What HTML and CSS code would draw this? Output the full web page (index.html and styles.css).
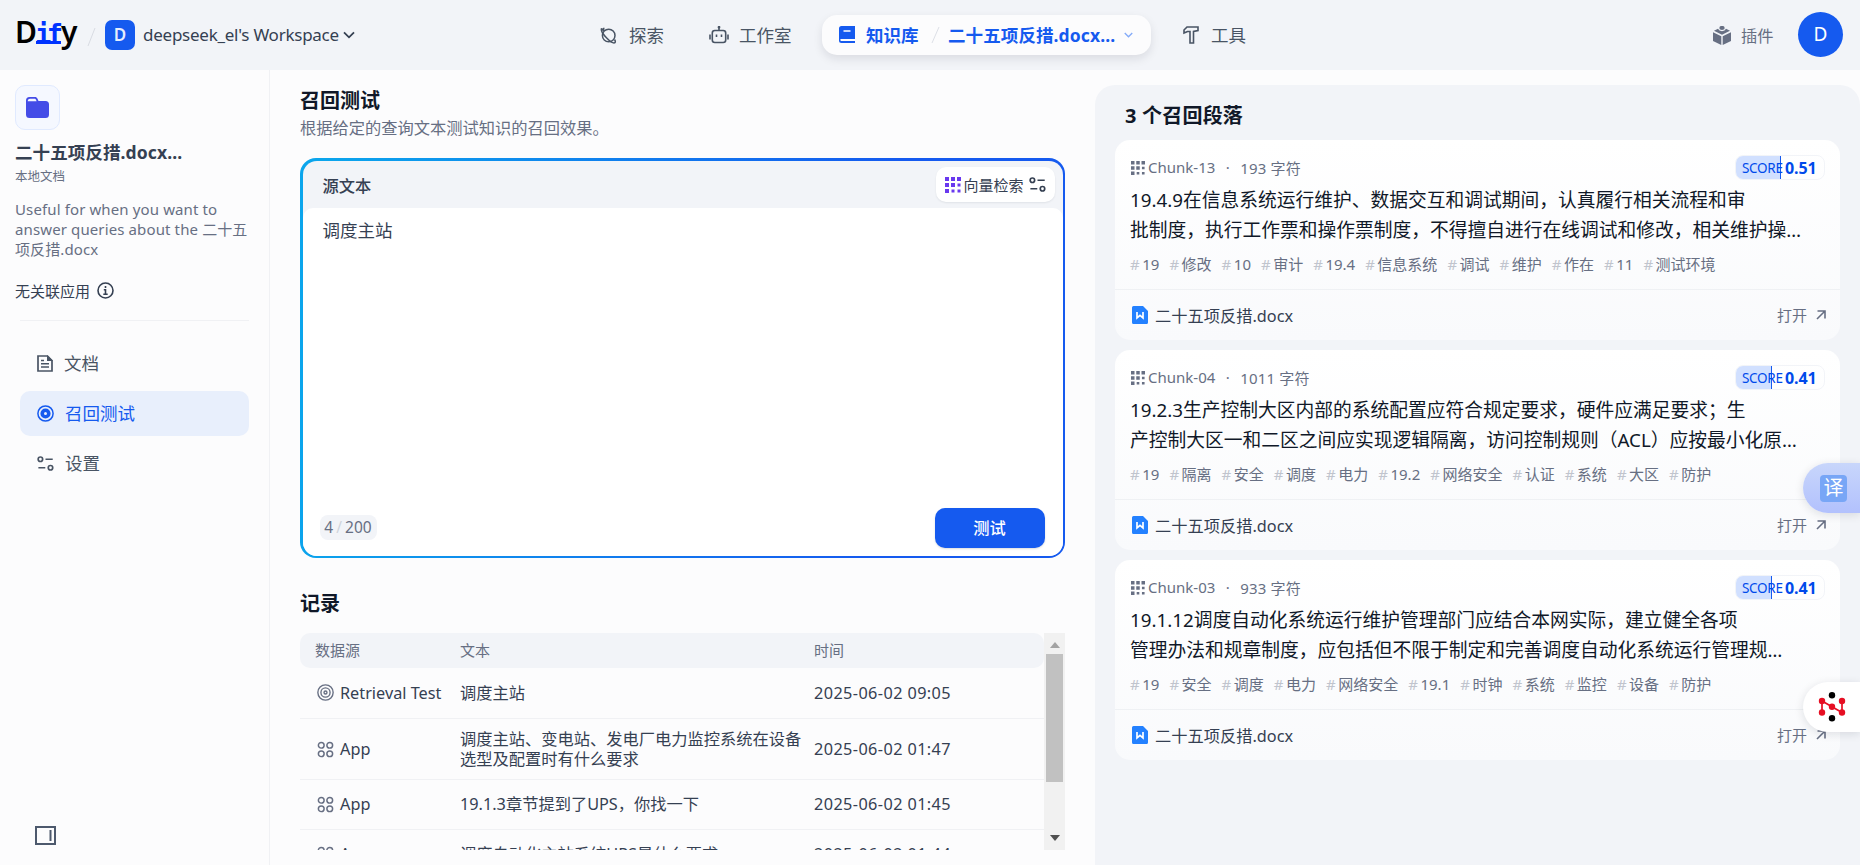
FILE: index.html
```
<!DOCTYPE html>
<html lang="zh-CN">

<head>
    <meta charset="UTF-8">
    <meta name="viewport" content="width=device-width, initial-scale=1.0">
    <title>召回测试 - Dify</title>
    <link rel="stylesheet" href="styles.css">
</head>

<body>
    <!-- shared icons -->
    <svg class="defs" width="0" height="0">
        <symbol id="i-dots" viewBox="0 0 16 16">
            <path d="M0 0h4v4H0zM6 0h4v4H6zM12 0h4v4h-4zM0 6h4v4H0zM6 6h4v4H6zM12.5 6.5h3v3h-3zM0 12h4v4H0zM6.5 12.5h3v3h-3zM12.5 12.5h3v3h-3z" fill="currentColor" />
        </symbol>
        <symbol id="i-sliders" viewBox="0 0 16 16">
            <g fill="none" stroke="currentColor" stroke-width="1.6">
                <circle cx="3.2" cy="4" r="2.1" />
                <path d="M8 4h6.8M1.3 12h6.5" />
                <circle cx="12.7" cy="12" r="2.1" />
            </g>
        </symbol>
        <symbol id="i-target" viewBox="0 0 16 16">
            <g fill="none" stroke="currentColor" stroke-width="1.3">
                <circle cx="8" cy="8" r="7.2" />
                <circle cx="8" cy="8" r="4.3" />
                <circle cx="8" cy="8" r="1.4" />
            </g>
        </symbol>
        <symbol id="i-app" viewBox="0 0 16 16">
            <g fill="none" stroke="currentColor" stroke-width="1.4">
                <circle cx="4" cy="4" r="2.7" />
                <circle cx="12" cy="4" r="2.7" />
                <circle cx="4" cy="12" r="2.7" />
                <circle cx="12" cy="12" r="2.7" />
            </g>
        </symbol>
        <symbol id="i-word" viewBox="0 0 16 18">
            <path d="M1.5 0H11l5 5v11.5a1.5 1.5 0 0 1-1.5 1.5h-13A1.5 1.5 0 0 1 0 16.500v-15A1.5 1.5 0 0 1 1.500 0z" fill="#2381ff" />
            <path d="M5 6v6l3-2.600 3 2.600V6" fill="none" stroke="#fff" stroke-width="1.7" />
        </symbol>
        <symbol id="i-arrow" viewBox="0 0 10 10">
            <path d="M1.500 1H9v7.500M9 1L1 9" fill="none" stroke="currentColor" stroke-width="1.6" />
        </symbol>
        <symbol id="i-down" viewBox="0 0 12 8">
            <path d="M1 1.300l5 5 5-5" fill="none" stroke="currentColor" stroke-width="1.8" />
        </symbol>
    </svg>

    <header class="header">
        <div class="header-left">
            <div class="logo">D<span>if</span>y</div>
            <svg class="slash" width="9" height="20" viewBox="0 0 9 20"><path d="M8 1L1 19" stroke="#d9dce3" fill="none" /></svg>
            <div class="ws-icon">D</div>
            <div class="ws-name">deepseek_el's Workspace</div>
            <svg class="ws-down" width="12" height="8"><use href="#i-down" /></svg>
        </div>
        <nav class="nav">
            <a class="nav-item explore">
                <svg width="17" height="17" viewBox="0 0 17 17" fill="none" stroke="currentColor" stroke-width="1.500">
                    <circle cx="8.700" cy="8.500" r="6.300" />
                    <path d="M4 4C1.500 1.500 1 1 1.500 3.500c.7 3.500 9 12.500 12.500 12.500 1.700 0 1.700-1.700.5-3.500M4.300 3.800C3 2 2.500 1.200 4.500 1.500" />
                </svg>
                <span>探索</span>
            </a>
            <a class="nav-item studio">
                <svg width="20" height="18" viewBox="0 0 20 18" fill="none" stroke="currentColor" stroke-width="1.600">
                    <rect x="3.300" y="4.500" width="13.400" height="12" rx="2.500" />
                    <path d="M10 4.500V1M1 8.500v5M19 8.500v5" />
                    <circle cx="10" cy="1.200" r=".6" />
                    <path d="M7.500 8.500v2.400M12.500 8.500v2.400" />
                </svg>
                <span>工作室</span>
            </a>
            <div class="nav-active">
                <svg width="16" height="18" viewBox="0 0 16 18">
                    <path d="M2.500 0H16v13H2.500c-.8 0-1 .5-1 1s.3 1 1 1H16v2H2.500A2.500 2.500 0 0 1 0 14.500v-12A2.500 2.500 0 0 1 2.500 0z" fill="currentColor" />
                    <path d="M4.500 5h7" stroke="#fff" stroke-width="1.500" />
                    <path d="M1.500 13.800H16" stroke="#fff" stroke-width="1" />
                </svg>
                <b class="kb">知识库</b>
                <svg class="nav-slash" width="9" height="18" viewBox="0 0 9 18"><path d="M8 1L1 17" stroke="#dde0e7" fill="none" /></svg>
                <b class="doc">二十五项反措.docx...</b>
                <svg class="nav-down" width="9" height="6" viewBox="0 0 12 8"><use href="#i-down" width="12" height="8" /></svg>
            </div>
            <a class="nav-item tools">
                <svg width="16" height="18" viewBox="0 0 16 18" fill="none" stroke="currentColor" stroke-width="1.600">
                    <path d="M4 1h11v3.500l-4.500 1V17H7V5.500H4.500L1 7V4z" />
                </svg>
                <span>工具</span>
            </a>
        </nav>
        <div class="header-right">
            <svg width="18" height="19" viewBox="0 0 18 19" fill="currentColor">
                <path d="M0 6.300l8.300 4V19L0 15zM18 6.300l-8.300 4V19L18 15zM1 4.800l4-2 1.500 1.700 2.500.8 2.500-.8L13 2.800l4 2-8 4zM6.500 1.200c0-1.500 5-1.500 5 0v1.600c0 1.500-5 1.500-5 0z" />
            </svg>
            <span class="plugin">插件</span>
            <div class="avatar">D</div>
        </div>
    </header>

    <div class="page">
        <aside class="sidebar">
            <div class="ds-icon">
                <svg width="23" height="21" viewBox="0 0 23 21">
                    <path d="M3.500 0h5.200c1.500 0 2.300.6 2.800 1.800l1 2.200H19.500A3.500 3.500 0 0 1 23 7.500v10a3.500 3.500 0 0 1-3.500 3.500h-16A3.500 3.500 0 0 1 0 17.500v-14A3.500 3.500 0 0 1 3.500 0z" fill="#444ce7" />
                    <path d="M1.700 4.200C2 2.500 2.800 1.800 4 1.800h4.300c1 0 1.500.4 1.800 1.200l.5 1.200z" fill="#f5f8ff" />
                </svg>
            </div>
            <div class="ds-name">二十五项反措.docx...</div>
            <div class="ds-type">本地文档</div>
            <div class="ds-desc">Useful for when you want to<br>answer queries about the 二十五<br>项反措.docx</div>
            <div class="ds-apps">无关联应用
                <svg width="17" height="17" viewBox="0 0 17 17" fill="none" stroke="currentColor" stroke-width="1.600">
                    <circle cx="8.500" cy="8.500" r="7.500" />
                    <path d="M8.500 4v2M6.800 7.800h1.700v4.500M6.300 12.300h4.400" />
                </svg>
            </div>
            <div class="side-nav">
                <a class="side-item">
                    <svg width="16" height="17" viewBox="0 0 16 17">
                        <path d="M1 1h9.500L15 5.500V16H1z" fill="none" stroke="currentColor" stroke-width="1.700" />
                        <path d="M10 0l6 6h-6z" fill="currentColor" />
                        <path d="M4 5.500h3M4 8.800h8M4 12h8" stroke="currentColor" stroke-width="1.500" />
                    </svg>
                    <span>文档</span>
                </a>
                <a class="side-item active">
                    <svg width="17" height="17" viewBox="0 0 17 17" fill="none" stroke="currentColor">
                        <circle cx="8.500" cy="8.500" r="7.600" stroke-width="1.500" />
                        <circle cx="8.500" cy="8.500" r="3.300" stroke-width="3.600" />
                    </svg>
                    <span>召回测试</span>
                </a>
                <a class="side-item">
                    <svg width="17" height="17"><use href="#i-sliders" /></svg>
                    <span>设置</span>
                </a>
            </div>
            <svg class="collapse" width="21" height="19" viewBox="0 0 21 19" fill="none" stroke="#4d596d" stroke-width="2">
                <path d="M1 1h19v17H1zM15.500 4v11" />
            </svg>
        </aside>

        <main class="main">
            <h1>召回测试</h1>
            <p class="sub">根据给定的查询文本测试知识的召回效果。</p>

            <div class="query">
                <div class="query-inner">
                    <div class="query-head">
                        <span>源文本</span>
                        <div class="method">
                            <svg class="purple" width="16" height="16"><use href="#i-dots" /></svg>
                            <span>向量检索</span>
                            <svg width="17" height="17"><use href="#i-sliders" /></svg>
                        </div>
                    </div>
                    <div class="query-body">
                        <div class="query-text">调度主站</div>
                        <div class="query-foot">
                            <div class="count">4<i>/</i>200</div>
                            <button class="test-btn">测试</button>
                        </div>
                    </div>
                </div>
            </div>

            <h2>记录</h2>
            <div class="records">
                <div class="table">
                    <div class="row thead"><span>数据源</span><span>文本</span><span>时间</span></div>
                    <div class="row first">
                        <span class="src"><svg width="17" height="17"><use href="#i-target" /></svg>Retrieval Test</span>
                        <span>调度主站</span>
                        <span class="time">2025-06-02 09:05</span>
                    </div>
                    <div class="row tall">
                        <span class="src"><svg width="17" height="17"><use href="#i-app" /></svg>App</span>
                        <span>调度主站、变电站、发电厂电力监控系统在设备<br>选型及配置时有什么要求</span>
                        <span class="time">2025-06-02 01:47</span>
                    </div>
                    <div class="row">
                        <span class="src"><svg width="17" height="17"><use href="#i-app" /></svg>App</span>
                        <span>19.1.3章节提到了UPS，你找一下</span>
                        <span class="time">2025-06-02 01:45</span>
                    </div>
                    <div class="row">
                        <span class="src"><svg width="17" height="17"><use href="#i-app" /></svg>App</span>
                        <span>调度自动化主站系统UPS是什么要求</span>
                        <span class="time">2025-06-02 01:44</span>
                    </div>
                </div>
                <div class="scrollbar">
                    <svg width="10" height="6" viewBox="0 0 10 6"><path d="M0 6l5-6 5 6z" fill="#a3a3a3" /></svg>
                    <div class="thumb"></div>
                    <svg class="sb-down" width="10" height="6" viewBox="0 0 10 6"><path d="M0 0l5 6 5-6z" fill="#505050" /></svg>
                </div>
            </div>
        </main>

        <section class="results">
            <h2>3 个召回段落</h2>

            <article class="card">
                <div class="meta">
                    <svg width="14" height="14"><use href="#i-dots" /></svg>
                    <span class="chunk">Chunk-13</span><span class="dot">·</span><span class="chars">193 字符</span>
                    <div class="score"><div class="fill" style="width: 51%"></div><span>SCORE</span><b>0.51</b></div>
                </div>
                <p class="text">19.4.9在信息系统运行维护、数据交互和调试期间，认真履行相关流程和审<br>批制度，执行工作票和操作票制度，不得擅自进行在线调试和修改，相关维护操…</p>
                <div class="tags"><span>19</span><span>修改</span><span>10</span><span>审计</span><span>19.4</span><span>信息系统</span><span>调试</span><span>维护</span><span>作在</span><span>11</span><span>测试环境</span></div>
                <div class="card-foot">
                    <svg width="16" height="18"><use href="#i-word" /></svg>
                    <span class="file">二十五项反措.docx</span>
                    <span class="open">打开</span>
                    <svg class="arrow" width="10" height="10"><use href="#i-arrow" /></svg>
                </div>
            </article>

            <article class="card">
                <div class="meta">
                    <svg width="14" height="14"><use href="#i-dots" /></svg>
                    <span class="chunk">Chunk-04</span><span class="dot">·</span><span class="chars">1011 字符</span>
                    <div class="score"><div class="fill" style="width: 41%"></div><span>SCORE</span><b>0.41</b></div>
                </div>
                <p class="text">19.2.3生产控制大区内部的系统配置应符合规定要求，硬件应满足要求；生<br>产控制大区一和二区之间应实现逻辑隔离，访问控制规则（ACL）应按最小化原…</p>
                <div class="tags"><span>19</span><span>隔离</span><span>安全</span><span>调度</span><span>电力</span><span>19.2</span><span>网络安全</span><span>认证</span><span>系统</span><span>大区</span><span>防护</span></div>
                <div class="card-foot">
                    <svg width="16" height="18"><use href="#i-word" /></svg>
                    <span class="file">二十五项反措.docx</span>
                    <span class="open">打开</span>
                    <svg class="arrow" width="10" height="10"><use href="#i-arrow" /></svg>
                </div>
            </article>

            <article class="card">
                <div class="meta">
                    <svg width="14" height="14"><use href="#i-dots" /></svg>
                    <span class="chunk">Chunk-03</span><span class="dot">·</span><span class="chars">933 字符</span>
                    <div class="score"><div class="fill" style="width: 41%"></div><span>SCORE</span><b>0.41</b></div>
                </div>
                <p class="text">19.1.12调度自动化系统运行维护管理部门应结合本网实际，建立健全各项<br>管理办法和规章制度，应包括但不限于制定和完善调度自动化系统运行管理规…</p>
                <div class="tags"><span>19</span><span>安全</span><span>调度</span><span>电力</span><span>网络安全</span><span>19.1</span><span>时钟</span><span>系统</span><span>监控</span><span>设备</span><span>防护</span></div>
                <div class="card-foot">
                    <svg width="16" height="18"><use href="#i-word" /></svg>
                    <span class="file">二十五项反措.docx</span>
                    <span class="open">打开</span>
                    <svg class="arrow" width="10" height="10"><use href="#i-arrow" /></svg>
                </div>
            </article>
        </section>
    </div>

    <div class="float translate"><span>译</span></div>
    <div class="float network">
        <svg width="28" height="32" viewBox="0 0 28 32">
            <path d="M4 21.500V10l20 11.500V10" fill="none" stroke="#e60f23" stroke-width="1.700" />
            <g fill="#e60f23">
                <circle cx="4" cy="10" r="3.200" />
                <circle cx="4" cy="21.500" r="3.200" />
                <circle cx="14" cy="15.800" r="3.200" />
                <circle cx="24" cy="10" r="3.200" />
                <circle cx="24" cy="21.500" r="3.200" />
            </g>
            <circle cx="14" cy="4.300" r="3.200" />
            <circle cx="14" cy="27.200" r="3.200" />
        </svg>
    </div>
</body>

</html>
```

FILE: styles.css
```
* {
    margin: 0;
    padding: 0;
    box-sizing: border-box;
}

body {
    width: 1860px;
    height: 865px;
    overflow: hidden;
    position: relative;
    background: #fcfcfd;
    color: #354052;
    font-family: "Noto Sans", "Noto Sans CJK SC", sans-serif;
    font-size: 16.25px;
}

svg {
    display: block;
    flex: none;
}

.defs {
    position: absolute;
}

/* header */
.header {
    display: flex;
    height: 70px;
    background: #f2f4f8;
    align-items: center;
}

.header-left {
    display: flex;
    align-items: center;
    width: 600px;
    padding-left: 15px;
}

.logo {
    display: flex;
    align-items: baseline;
    width: 64px;
    font-size: 30px;
    line-height: 40px;
    font-weight: 600;
    color: #000;
    margin-top: -4px;
}

/* slab "if" joined by a foot bar */
.logo span {
    position: relative;
    width: 25px;
    margin-left: -1px;
    font-family: "DejaVu Sans Mono", monospace;
    font-size: 27px;
    font-weight: bold;
    letter-spacing: -4.5px;
    text-indent: -1px;
    white-space: nowrap;
    color: #0033ff;
}

.logo span::after {
    content: "";
    position: absolute;
    left: 0;
    bottom: 10px;
    width: 25px;
    height: 3px;
    background: #0033ff;
}

.slash {
    margin: 4px 9px 0 8px;
}

.ws-icon {
    width: 30px;
    height: 30px;
    border-radius: 7px;
    background: #155aef;
    color: #e6edfd;
    font-size: 17px;
    font-weight: 600;
    line-height: 30px;
    text-align: center;
}

.ws-name {
    width: 200px;
    margin-left: 8px;
    padding-bottom: 1px;
    font-size: 17px;
    letter-spacing: -0.25px;
    white-space: nowrap;
}

.nav {
    display: flex;
    align-items: center;
    width: 1113px;
    font-size: 17.5px;
    color: #495464;
}

.nav-item {
    display: flex;
    align-items: center;
}

.nav-item span,
.side-item span {
    padding-bottom: 2px;
}

.explore {
    width: 109px;
    gap: 12px;
}

.studio {
    width: 113px;
    gap: 10px;
}

.nav-active {
    display: flex;
    align-items: center;
    width: 329px;
    height: 40px;
    padding-left: 17px;
    border-radius: 15px;
    background: #fcfcfd;
    color: #155aef;
    box-shadow: 0 4px 10px rgba(16, 24, 40, 0.1);
}

.nav-active b {
    padding-bottom: 1px;
}

.kb {
    width: 54px;
    margin-left: 11px;
}

.nav-slash {
    margin: 0 8px 0 11px;
}

.doc {
    width: 176px;
    letter-spacing: 0.1px;
    white-space: nowrap;
}

.nav-down {
    color: #84abf8;
}

.tools {
    margin-left: 32px;
    gap: 12px;
}

.header-right {
    display: flex;
    align-items: center;
    color: #676f83;
}

.plugin {
    width: 57px;
    margin-left: 10px;
    padding-bottom: 1px;
}

.avatar {
    width: 45px;
    height: 45px;
    margin-top: -1px;
    border-radius: 50%;
    background: #155aef;
    color: #fff;
    font-size: 19px;
    line-height: 45px;
    text-align: center;
}

/* layout */
.page {
    display: flex;
    height: 795px;
}

.sidebar {
    display: flex;
    flex-direction: column;
    width: 270px;
    padding: 15px 20px 0 15px;
    border-right: 1px solid #f0f1f4;
}

.ds-icon {
    display: flex;
    align-items: center;
    justify-content: center;
    width: 45px;
    height: 45px;
    border: 1px solid #e0eaff;
    border-radius: 10px;
    background: #f5f8ff;
}

.ds-name {
    margin-top: 10px;
    font-size: 17.5px;
    font-weight: bold;
    line-height: 25px;
    letter-spacing: 0.1px;
    white-space: nowrap;
}

.ds-type {
    margin-top: 2px;
    font-size: 12.5px;
    line-height: 20px;
    color: #676f83;
}

.ds-desc {
    margin-top: 12px;
    font-size: 15px;
    line-height: 20px;
    letter-spacing: 0.12px;
    color: #676f83;
    white-space: nowrap;
}

.ds-apps {
    display: flex;
    align-items: center;
    gap: 7px;
    height: 20px;
    margin-top: 21px;
    font-size: 15px;
}

.side-nav {
    display: flex;
    flex-direction: column;
    gap: 5px;
    width: 229px;
    margin: 20px 0 0 5px;
    padding-top: 20px;
    border-top: 1px solid #f0f1f4;
}

.side-item {
    display: flex;
    align-items: center;
    gap: 11px;
    height: 45px;
    padding-left: 17px;
    border-radius: 10px;
    font-size: 17.5px;
    color: #495464;
}

.side-item.active {
    background: #e8effc;
    color: #155aef;
}

.collapse {
    margin: auto 0 20px 20px;
}

.main {
    width: 825px;
    padding: 18px 30px 0 30px;
}

h1,
h2 {
    font-size: 20px;
    line-height: 26px;
    color: #101828;
}

.sub {
    margin-top: 3px;
    line-height: 22px;
    color: #676f83;
}

.query {
    height: 400px;
    margin-top: 19px;
    padding: 2.500px;
    border-radius: 16px;
    background: linear-gradient(95deg, #0ba5ec 3%, #155aef 75%);
}

.query-inner {
    height: 100%;
    border-radius: 14px;
    background: #f2f4f8;
    overflow: hidden;
}

.query-head {
    display: flex;
    align-items: center;
    justify-content: space-between;
    height: 47px;
    padding: 1px 8px 0 20px;
    font-weight: 500;
}

.method {
    display: flex;
    align-items: center;
    width: 119px;
    height: 35px;
    padding-left: 9px;
    border-radius: 10px;
    background: #fff;
    box-shadow: 0 1px 2px rgba(16, 24, 40, 0.08);
    font-size: 15px;
    font-weight: 400;
}

.method span {
    width: 65px;
    margin-left: 3px;
    padding-bottom: 1px;
}

.purple {
    color: #6938ef;
}

.query-body {
    display: flex;
    flex-direction: column;
    justify-content: space-between;
    height: 348px;
    padding: 10px 18px 8px 17px;
    border-radius: 10px 10px 0 0;
    background: #fff;
}

.query-text {
    padding-left: 3px;
    font-size: 17.5px;
    line-height: 25px;
}

.query-foot {
    display: flex;
    align-items: center;
    justify-content: space-between;
}

.count {
    width: 57px;
    height: 25px;
    border-radius: 8px;
    background: #f2f4f8;
    color: #676f83;
    font-size: 15.5px;
    line-height: 25px;
    text-align: center;
}

.count i {
    padding: 0 3px;
    font-style: normal;
    color: #d0d5dc;
}

.test-btn {
    width: 110px;
    height: 40px;
    padding-bottom: 1px;
    border: none;
    border-radius: 10px;
    background: #155aef;
    box-shadow: 0 1px 2px rgba(16, 24, 40, 0.15);
    color: #fff;
    font-family: inherit;
    font-size: 16.25px;
    font-weight: 500;
}

.main h2 {
    margin-top: 33px;
}

/* records */
.records {
    display: flex;
    height: 217px;
    margin-top: 16px;
    overflow: hidden;
}

.table {
    width: 744px;
}

.row {
    display: grid;
    grid-template-columns: 145px 354px 1fr;
    align-items: center;
    height: 50px;
    padding-left: 15px;
    padding-bottom: 1px;
    border-bottom: 1px solid #f0f1f4;
    line-height: 20px;
    white-space: nowrap;
}

.row.first {
    height: 51px;
}

.row.tall {
    height: 61px;
    padding-bottom: 0;
}

.row.thead {
    height: 35px;
    border: none;
    border-radius: 10px;
    background: #f2f4f8;
    color: #676f83;
    font-size: 15px;
}

.src {
    display: flex;
    align-items: center;
    gap: 6px;
    padding-left: 2px;
}

.src svg {
    color: #676f83;
}

.time {
    letter-spacing: 0.4px;
}

.scrollbar {
    display: flex;
    flex-direction: column;
    align-items: center;
    width: 21px;
    padding: 9px 0;
    background: #f1f1f1;
}

.thumb {
    width: 17px;
    height: 128px;
    margin-top: 6px;
    background: #c1c1c1;
}

.sb-down {
    margin-top: auto;
}

/* results */
.results {
    width: 765px;
    margin-top: 15px;
    padding: 18px 20px 0 20px;
    border-radius: 20px 20px 0 0;
    background: #f2f4f8;
}

.results h2 {
    margin-bottom: 11px;
    padding-left: 10px;
    letter-spacing: 0.2px;
}

.card {
    height: 200px;
    margin-bottom: 10px;
    border-radius: 15px;
    background: linear-gradient(#fff, #f9fafc);
    overflow: hidden;
}

.meta {
    display: flex;
    align-items: center;
    height: 25px;
    margin-top: 15px;
    padding: 0 15px 0 16px;
    color: #676f83;
    font-size: 15px;
}

.meta > span {
    padding-bottom: 1px;
}

.chunk {
    margin-left: 3px;
}

.dot {
    width: 25px;
    text-align: center;
}

.chars {
    letter-spacing: 0.15px;
}

.score {
    position: relative;
    display: flex;
    align-items: center;
    width: 90px;
    height: 25px;
    margin-left: auto;
    padding-left: 6px;
    border: 1px solid #f2f4f8;
    border-radius: 8px;
    color: #004aeb;
    overflow: hidden;
}

.score .fill {
    position: absolute;
    left: 0;
    top: 0;
    height: 100%;
    background: #d1e0ff;
    border-right: 1px solid #155aef;
}

.score span {
    position: relative;
    width: 43px;
    font-size: 13.5px;
    letter-spacing: -0.3px;
}

.score b {
    position: relative;
    font-size: 16px;
    letter-spacing: -0.1px;
}

.text {
    margin-top: 5px;
    padding-left: 15px;
    font-size: 18.75px;
    line-height: 30px;
    color: #101828;
    white-space: nowrap;
}

.tags {
    display: flex;
    gap: 10px;
    height: 20px;
    margin-top: 9px;
    padding-left: 15px;
    font-size: 15px;
    line-height: 20px;
    color: #676f83;
}

.tags span::before {
    content: "#";
    margin-right: 2.5px;
    color: #c0c4cd;
}

.card-foot {
    display: flex;
    align-items: center;
    height: 51px;
    margin-top: 15px;
    padding: 0 14px 0 17px;
    border-top: 1px solid #eff1f4;
}

.file {
    margin-left: 7px;
    padding-bottom: 1px;
}

.open {
    margin-left: auto;
    padding-bottom: 1px;
    font-size: 15px;
    color: #676f83;
}

.arrow {
    margin-left: 9px;
    color: #676f83;
}

/* browser extension buttons on the right edge */
.float {
    position: absolute;
    right: 0;
    display: flex;
    align-items: center;
    width: 57px;
    height: 50px;
    border-radius: 25px 0 0 25px;
    box-shadow: 0 2px 10px rgba(16, 24, 40, 0.12);
}

.translate {
    top: 463px;
    padding-left: 17px;
    background: linear-gradient(#c8d6fb, #b2c1fd);
}

.translate span {
    width: 27px;
    height: 27px;
    border-radius: 4px;
    background: #78a6f6;
    color: #fff;
    font-size: 20px;
    line-height: 26px;
    text-align: center;
}

.network {
    top: 682px;
    padding-left: 15px;
    background: #fff;
}
```
